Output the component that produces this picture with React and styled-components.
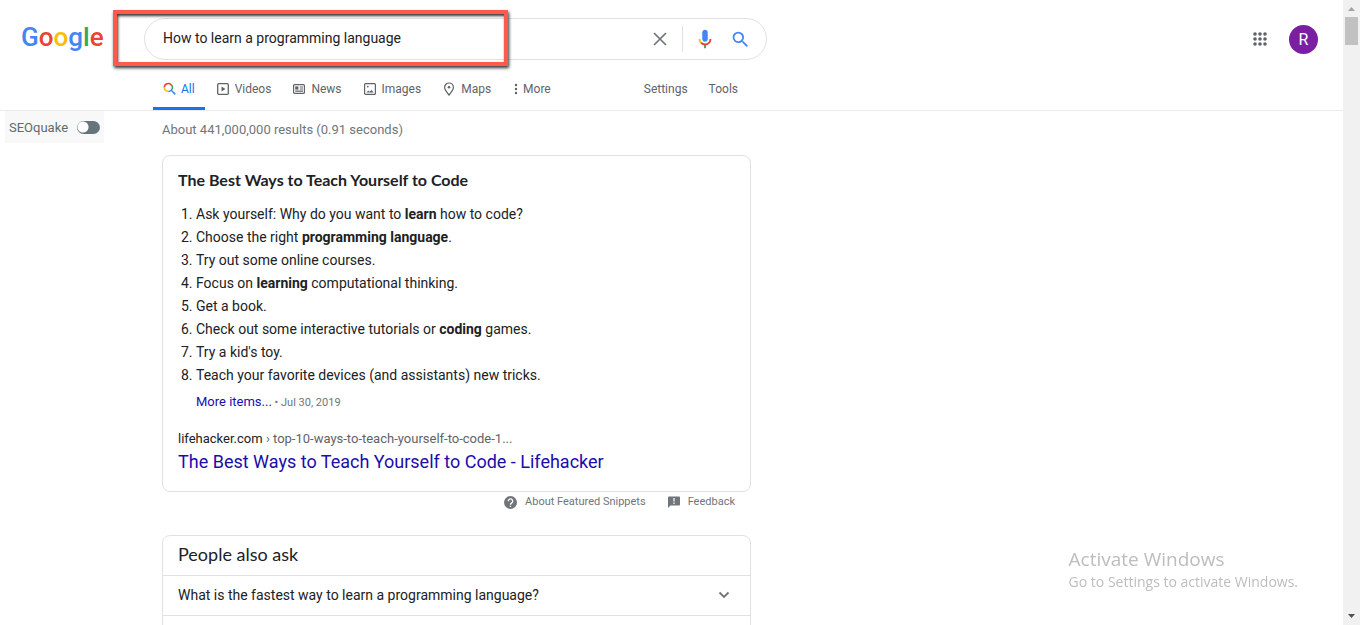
import { useState } from "react";
import styled, { createGlobalStyle } from "styled-components";

const GlobalStyle = createGlobalStyle`
	* {
		box-sizing: border-box;
	}
	body {
		margin: 0;
		background-color: white;
		color: #202124;
		font-family: Roboto, "Liberation Sans", sans-serif;
	}
	a {
		color: inherit;
		text-decoration: none;
	}
	button {
		padding: 0;
		border: none;
		background: none;
		color: inherit;
		font: inherit;
		cursor: pointer;
	}
	h1, h2, h3, ol, p {
		margin: 0;
		padding: 0;
		font-weight: 400;
	}
	svg {
		display: block;
		flex: none;
	}
`;

const Window = styled.div`
	display: flex;
	height: 100vh;
	overflow: hidden;
`;

const Page = styled.div`
	flex: 1;
	min-width: 0;
`;

const Header = styled.header`
	position: relative;
	display: grid;
	grid-template-columns: 144px minmax(0, 623px) 1fr;
	padding-top: 18px;
	border-bottom: 1px solid #ebebeb;
`;

const Logo = styled.a`
	padding-left: 21px;
	font-size: 26px;
	font-weight: 500;
	line-height: 38px;
`;

const LogoLetter = styled.span`
	color: ${(props) => props.$color};
`;

const SearchBox = styled.form`
	display: flex;
	align-items: center;
	height: 42px;
	padding: 0 13px 0 18px;
	border: 1px solid #dfe1e5;
	border-radius: 24px;
`;

const SearchInput = styled.input`
	flex: 1;
	min-width: 0;
	height: 38px;
	padding: 0 0 2px;
	border: none;
	outline: none;
	background: none;
	color: #202124;
	font-family: inherit;
	font-size: 14px;
`;

const BoxButton = styled.button`
	display: flex;
	justify-content: center;
	width: ${(props) => props.$width};
`;

const Divider = styled.span`
	width: 1px;
	height: 26px;
	background-color: #dfe1e5;
`;

const Highlight = styled.div`
	position: absolute;
	top: 10px;
	left: 113px;
	width: 395px;
	height: 56px;
	border: 4px solid #ff5a4b;
	box-shadow: 1px 2px 3px rgba(0, 0, 0, 0.8), inset 1px 2px 3px rgba(0, 0, 0, 0.8);
	pointer-events: none;
`;

const Nav = styled.nav`
	grid-column: 2;
	display: flex;
	gap: 2px;
	height: 50px;
	padding: 10px 29px 0 9px;
	color: #5f6368;
	font-size: 12px;
`;

const Tab = styled.a`
	display: flex;
	align-items: center;
	gap: 4px;
	padding: 0 10px;
	border-bottom: 3px solid ${(props) => (props.$active ? "#1a73e8" : "transparent")};
	color: ${(props) => (props.$active ? "#1a73e8" : "#5f6368")};
`;

const NavOptions = styled.div`
	display: flex;
	align-items: center;
	gap: 21px;
	margin-left: auto;
	border-bottom: 3px solid transparent;
`;

const Account = styled.div`
	display: flex;
	justify-content: flex-end;
	align-items: center;
	gap: 21px;
	height: 42px;
	padding-right: 25px;
`;

const Avatar = styled.button`
	width: 29px;
	height: 29px;
	border-radius: 50%;
	background-color: #7b1fa2;
	color: white;
	font-size: 16px;
`;

const Content = styled.div`
	display: grid;
	grid-template-columns: 162px minmax(0, 589px);
	align-items: start;
`;

const Seo = styled.label`
	display: flex;
	align-items: center;
	justify-content: space-between;
	width: 99px;
	height: 32px;
	margin-left: 5px;
	padding: 0 4px;
	background-color: #f8f8f8;
	color: #5f6b70;
	font-size: 13px;
`;

const Toggle = styled.input`
	appearance: none;
	width: 23px;
	height: 13px;
	margin: 0;
	border-radius: 7px;
	background: radial-gradient(circle at 6px 6px, white 5px, #66757c 6px);
`;

const Results = styled.main`
	padding-top: 9px;
`;

const Stats = styled.p`
	margin-bottom: 15px;
	color: #70757a;
	font-size: 13px;
	line-height: 20px;
`;

const Card = styled.section`
	border: 1px solid #dfe1e5;
	border-radius: 8px;
`;

const Snippet = styled(Card)`
	padding: 14px 15px 16px;
`;

const SnippetTitle = styled.h2`
	font-family: Lato, sans-serif;
	font-size: 16px;
	font-weight: 700;
	line-height: 20px;
`;

const Steps = styled.ol`
	margin-top: 13px;
	padding-left: 18px;
	font-size: 14px;
	line-height: 23px;
`;

const MoreItems = styled.p`
	margin-top: 5px;
	padding-left: 18px;
	color: #70757a;
	font-size: 11px;
	line-height: 20px;
	> a {
		color: #1a0dab;
		font-size: 13px;
	}
`;

const Cite = styled.p`
	margin-top: 16px;
	color: #5f6368;
	font-size: 13px;
	line-height: 20px;
	> span {
		color: #202124;
	}
`;

const ResultTitle = styled.h3`
	color: #1a0dab;
	font-size: 18px;
	line-height: 26px;
`;

const SnippetFooter = styled.footer`
	display: flex;
	justify-content: flex-end;
	gap: 22px;
	margin-bottom: 23px;
	padding-right: 16px;
	color: #70757a;
	font-size: 11px;
	line-height: 20px;
	> a {
		display: flex;
		align-items: center;
		gap: 8px;
	}
`;

const AskTitle = styled.h2`
	padding: 0 15px 2px;
	font-family: Lato, sans-serif;
	font-size: 18px;
	line-height: 37px;
`;

const Question = styled.button`
	display: flex;
	align-items: center;
	justify-content: space-between;
	width: 100%;
	height: 40px;
	padding: 0 20px 2px 15px;
	border-top: 1px solid #dfe1e5;
	font-size: 14px;
	text-align: left;
`;

const ScrollTrack = styled.div`
	display: flex;
	flex-direction: column;
	align-items: center;
	width: 17px;
	background-color: #f1f1f1;
`;

const ScrollThumb = styled.div`
	width: 13px;
	height: 28px;
	margin-bottom: auto;
	background-color: #c1c1c1;
`;

const Watermark = styled.div`
	position: fixed;
	right: 62px;
	bottom: 33px;
	color: #bdbdbd;
	font-family: "Open Sans", sans-serif;
	font-size: 14px;
	line-height: 20px;
	> p:first-child {
		font-size: 19px;
		line-height: 26px;
	}
`;

const logo = [
	["G", "#4285f4"],
	["o", "#ea4335"],
	["o", "#fbbc05"],
	["g", "#4285f4"],
	["l", "#34a853"],
	["e", "#ea4335"],
];

const AllIcon = () => (
	<svg width="14" height="14" viewBox="0 0 14 14" fill="none" strokeWidth="1.5">
		<path d="M1.3 5.5A4 4 0 0 1 8.1 2.6" stroke="#ea4335" />
		<path d="M1.3 5.3A4 4 0 0 0 5.3 9.5" stroke="#fbbc05" />
		<path d="M8 2.6A4 4 0 0 1 8.4 8.1" stroke="#34a853" />
		<path d="M5.3 9.5A4 4 0 0 0 8.2 8.3L12.3 12.4" stroke="#4285f4" />
	</svg>
);

const VideosIcon = () => (
	<svg width="14" height="14" viewBox="0 0 14 14">
		<rect x="0.7" y="1.7" width="10.6" height="10.6" rx="1" fill="none" stroke="#5f6368" strokeWidth="1.3" />
		<path d="M4.5 4.5v5l4-2.5z" fill="#5f6368" />
	</svg>
);

const NewsIcon = () => (
	<svg width="14" height="14" viewBox="0 0 14 14" fill="none" stroke="#5f6368" strokeWidth="1.2">
		<rect x="0.6" y="2.6" width="10.8" height="8.8" rx="1" />
		<path d="M6.8 5H10M6.8 7H10M2.2 9.2H10" />
		<path d="M2.2 4.4h3.2v3.2H2.2z" fill="#5f6368" stroke="none" />
	</svg>
);

const ImagesIcon = () => (
	<svg width="14" height="14" viewBox="0 0 14 14">
		<rect x="0.6" y="1.6" width="10.8" height="10.8" rx="1" fill="none" stroke="#5f6368" strokeWidth="1.2" />
		<path d="M2.5 10.5l1.700-2 1.300 1.300L7.500 8l2.200 2.500z" fill="#5f6368" />
		<circle cx="3.800" cy="4.600" r="0.900" fill="#5f6368" />
	</svg>
);

const MapsIcon = () => (
	<svg width="14" height="14" viewBox="0 0 14 14">
		<path
			d="M6 13C3.5 10 1.6 7.7 1.6 5.4a4.4 4.4 0 0 1 8.8 0C10.4 7.7 8.5 10 6 13z"
			fill="none"
			stroke="#5f6368"
			strokeWidth="1.2"
		/>
		<circle cx="6" cy="5.3" r="1.3" fill="#5f6368" />
	</svg>
);

const MoreIcon = () => (
	<svg width="6" height="14" viewBox="0 0 6 14" fill="#5f6368">
		<circle cx="3" cy="3" r="1.2" />
		<circle cx="3" cy="7" r="1.2" />
		<circle cx="3" cy="11" r="1.2" />
	</svg>
);

const MicIcon = () => (
	<svg width="22" height="22" viewBox="0 0 24 24">
		<path d="M12 15c1.66 0 3-1.31 3-2.97V4.98C15 3.32 13.66 2 12 2S9 3.32 9 4.98v7.05C9 13.69 10.34 15 12 15z" fill="#4285f4" />
		<path d="M11 18.08h2V22h-2z" fill="#34a853" />
		<path d="M7.05 16.87C5.78 15.59 5 13.84 5 12h2c0 1.45.56 2.42 1.47 3.38z" fill="#fbbc05" />
		<path d="M12 16.93a4.97 4.97 0 0 1-3.54-1.55l-1.41 1.49A6.97 6.97 0 0 0 12 19c3.87 0 6.99-2.92 6.99-7h-1.99c0 2.92-2.24 4.93-5 4.93z" fill="#ea4335" />
	</svg>
);

const SearchIcon = () => (
	<svg width="21" height="21" viewBox="0 0 24 24" fill="#4285f4">
		<path d="M15.5 14h-.79l-.28-.27A6.471 6.471 0 0 0 16 9.5 6.5 6.5 0 1 0 9.5 16c1.61 0 3.09-.59 4.23-1.57l.27.28v.79l5 4.99L20.49 19zm-6 0C7.01 14 5 11.99 5 9.5S7.01 5 9.5 5 14 7.01 14 9.5 11.99 14 9.5 14z" />
	</svg>
);

const tabs = [
	["All", AllIcon],
	["Videos", VideosIcon],
	["News", NewsIcon],
	["Images", ImagesIcon],
	["Maps", MapsIcon],
	["More", MoreIcon],
];

const App = () => {
	const [query, setQuery] = useState("How to learn a programming language");
	const [seoActive, setSeoActive] = useState(false);

	return (
		<Window>
			<GlobalStyle />
			<Page>
				<Header>
					<Logo href="#">
						{logo.map(([letter, color], i) => (
							<LogoLetter key={i} $color={color}>{letter}</LogoLetter>
						))}
					</Logo>
					<SearchBox onSubmit={(e) => e.preventDefault()}>
						<SearchInput aria-label="Search" value={query} onChange={(e) => setQuery(e.target.value)} />
						<BoxButton type="button" $width="44px" aria-label="Clear" onClick={() => setQuery("")}>
							<svg width="14" height="14" viewBox="0 0 14 14" stroke="#70757a" strokeWidth="1.7">
								<path d="M1 1l12 12M13 1L1 13" />
							</svg>
						</BoxButton>
						<Divider />
						<BoxButton type="button" $width="44px" aria-label="Search by voice">
							<MicIcon />
						</BoxButton>
						<BoxButton $width="26px" aria-label="Search">
							<SearchIcon />
						</BoxButton>
					</SearchBox>
					<Account>
						<button aria-label="Apps">
							<svg width="16" height="16" viewBox="0 0 16 16" fill="#5f6368">
								{[3, 8, 13].map((y) => [3, 8, 13].map((x) => <circle key={`${x}-${y}`} cx={x} cy={y} r="1.8" />))}
							</svg>
						</button>
						<Avatar>R</Avatar>
					</Account>
					<Nav>
						{tabs.map(([name, Icon]) => (
							<Tab key={name} href="#" $active={name === "All"}>
								<Icon />
								{name}
							</Tab>
						))}
						<NavOptions>
							<a href="#">Settings</a>
							<a href="#">Tools</a>
						</NavOptions>
					</Nav>
					<Highlight />
				</Header>

				<Content>
					<Seo>
						SEOquake
						<Toggle type="checkbox" checked={seoActive} onChange={() => setSeoActive(!seoActive)} />
					</Seo>
					<Results>
						<Stats>About 441,000,000 results (0.91 seconds)</Stats>
						<Snippet>
							<SnippetTitle>The Best Ways to Teach Yourself to Code</SnippetTitle>
							<Steps>
								<li>Ask yourself: Why do you want to <b>learn</b> how to code?</li>
								<li>Choose the right <b>programming language</b>.</li>
								<li>Try out some online courses.</li>
								<li>Focus on <b>learning</b> computational thinking.</li>
								<li>Get a book.</li>
								<li>Check out some interactive tutorials or <b>coding</b> games.</li>
								<li>Try a kid's toy.</li>
								<li>Teach your favorite devices (and assistants) new tricks.</li>
							</Steps>
							<MoreItems><a href="#">More items...</a> • Jul 30, 2019</MoreItems>
							<Cite><span>lifehacker.com</span> › top-10-ways-to-teach-yourself-to-code-1...</Cite>
							<ResultTitle><a href="#">The Best Ways to Teach Yourself to Code - Lifehacker</a></ResultTitle>
						</Snippet>
						<SnippetFooter>
							<a href="#">
								<svg width="13" height="13" viewBox="0 0 24 24">
									<circle cx="12" cy="12" r="12" fill="#70757a" />
									<path d="M8 9.5a4 4 0 1 1 6.5 3.1C13 13.8 12 14.2 12 16M12 18v2.5" fill="none" stroke="white" strokeWidth="2.4" />
								</svg>
								About Featured Snippets
							</a>
							<a href="#">
								<svg width="12" height="12" viewBox="0 0 24 24">
									<path d="M2 1h20a2 2 0 0 1 2 2v14a2 2 0 0 1-2 2H5l-5 5V3a2 2 0 0 1 2-2z" fill="#70757a" />
									<path d="M12 4v7M12 13v3" stroke="white" strokeWidth="2.4" />
								</svg>
								Feedback
							</a>
						</SnippetFooter>
						<Card>
							<AskTitle>People also ask</AskTitle>
							<Question>
								What is the fastest way to learn a programming language?
								<svg width="12" height="12" viewBox="0 0 12 12" fill="none" stroke="#70757a" strokeWidth="1.8">
									<path d="M1.5 3.5L6 8l4.5-4.5" />
								</svg>
							</Question>
							<Question aria-label="Next question" />
						</Card>
					</Results>
				</Content>
			</Page>

			<ScrollTrack>
				<svg width="17" height="17" viewBox="0 0 17 17">
					<path d="M5 11l3.5-4 3.5 4z" fill="#a3a3a3" />
				</svg>
				<ScrollThumb />
				<svg width="17" height="17" viewBox="0 0 17 17">
					<path d="M5 6l3.5 4L12 6z" fill="#505050" />
				</svg>
			</ScrollTrack>

			<Watermark>
				<p>Activate Windows</p>
				<p>Go to Settings to activate Windows.</p>
			</Watermark>
		</Window>
	);
};

export default App;
